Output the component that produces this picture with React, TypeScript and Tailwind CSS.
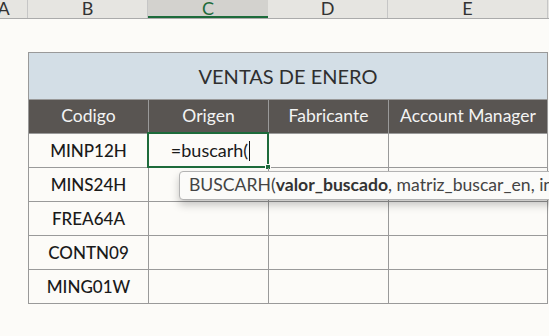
import React from 'react';

const codes = ['MINP12H', 'MINS24H', 'FREA64A', 'CONTN09', 'MING01W'];
const headers = ['Codigo', 'Origen', 'Fabricante', 'Account Manager'];

export default function App() {
  return (
    <div
      className="relative w-[549px] h-[336px] overflow-hidden bg-[#fcfbf8]"
      style={{ fontFamily: 'Lato, "Open Sans", sans-serif' }}
    >
      {/* column letters */}
      <div className="flex h-[19px] border-b border-[#ababab] bg-[#e6e5e1] text-[18px] leading-[17px] text-[#333]">
        <div className="ml-[-20px] w-[48px] shrink-0 border-r border-[#c6c6c6] text-center">A</div>
        <div className="w-[120px] shrink-0 border-r border-[#c6c6c6] text-center">B</div>
        <div className="w-[120px] shrink-0 border-b-2 border-[#1d6b3b] bg-[#d3d2ce] text-center text-[#1d6b3b]">C</div>
        <div className="w-[120px] shrink-0 border-r border-[#c6c6c6] text-center">D</div>
        <div className="w-[160px] shrink-0 border-r border-[#c6c6c6] text-center">E</div>
      </div>

      {/* table */}
      <div className="ml-[28px] mt-[33px] w-[520px] border-l border-t border-[#999]">
        <div className="flex h-[47px] items-center justify-center border-b border-r border-[#999] bg-[#d3dee6] text-[20px] text-[#2f2f2f]">
          VENTAS DE ENERO
        </div>
        <div className="grid grid-cols-[120px_120px_120px_159px] bg-[#595552]">
          {headers.map((h) => (
            <div
              key={h}
              className="flex h-[34px] items-center justify-center border-b border-r border-[#9a9a9a] text-[17.5px] text-[#f3f3f3]"
            >
              {h}
            </div>
          ))}
        </div>
        {codes.map((c, i) => (
          <div key={c} className="grid grid-cols-[120px_120px_120px_159px] text-[17px] text-[#1a1a1a]">
            <div className="flex h-[34px] items-center justify-center border-b border-r border-[#9a9a9a] font-medium">
              {c}
            </div>
            <div className="relative flex h-[34px] items-center justify-center border-b border-r border-[#9a9a9a]">
              {i === 0 && (
                <>
                  <span className="text-[18px] pl-1">=buscarh(</span>
                  <span className="ml-[1px] h-[20px] w-px bg-[#111]" />
                  <div className="absolute left-[-2px] top-[-2px] h-[36px] w-[122px] border-2 border-[#1d6b3b]" />
                  <div className="absolute right-[-3px] bottom-[-3px] h-[6px] w-[6px] border border-[#fcfbf8] bg-[#1d6b3b]" />
                </>
              )}
            </div>
            <div className="h-[34px] border-b border-r border-[#9a9a9a]" />
            <div className="h-[34px] border-b border-r border-[#9a9a9a]" />
          </div>
        ))}
      </div>

      {/* function tooltip */}
      <div className="absolute left-[179px] top-[171px] flex h-[29px] items-center whitespace-nowrap rounded-[4px] border border-[#b3b3b3] bg-[#fbfbf9] pl-[9px] pr-4 text-[17.6px] text-[#444] shadow-[0_5px_9px_rgba(0,0,0,0.22)]">
        BUSCARH(<span className="font-bold text-[#333]">valor_buscado</span>, matriz_buscar_en, indicador_filas, [ordenado])
      </div>
    </div>
  );
}
